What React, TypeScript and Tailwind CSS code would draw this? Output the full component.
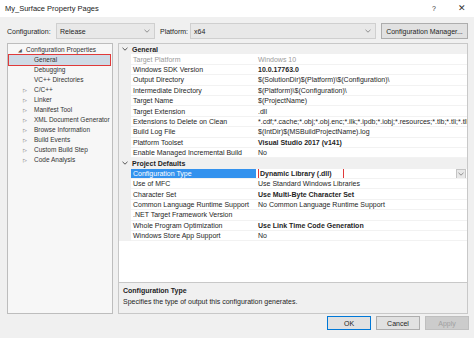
import React from "react";

type Row =
  | { kind: "header"; label: string }
  | { kind: "row"; name: string; value: string; bold?: boolean; disabled?: boolean; selected?: boolean };

const rows: Row[] = [
  { kind: "header", label: "General" },
  { kind: "row", name: "Target Platform", value: "Windows 10", disabled: true },
  { kind: "row", name: "Windows SDK Version", value: "10.0.17763.0", bold: true },
  { kind: "row", name: "Output Directory", value: "$(SolutionDir)$(Platform)\\$(Configuration)\\" },
  { kind: "row", name: "Intermediate Directory", value: "$(Platform)\\$(Configuration)\\" },
  { kind: "row", name: "Target Name", value: "$(ProjectName)" },
  { kind: "row", name: "Target Extension", value: ".dll" },
  {
    kind: "row",
    name: "Extensions to Delete on Clean",
    value: "*.cdf;*.cache;*.obj;*.obj.enc;*.ilk;*.ipdb;*.iobj;*.resources;*.tlb;*.tli;*.tlh;*.t",
  },
  { kind: "row", name: "Build Log File", value: "$(IntDir)$(MSBuildProjectName).log" },
  { kind: "row", name: "Platform Toolset", value: "Visual Studio 2017 (v141)", bold: true },
  { kind: "row", name: "Enable Managed Incremental Build", value: "No" },
  { kind: "header", label: "Project Defaults" },
  { kind: "row", name: "Configuration Type", value: "Dynamic Library (.dll)", bold: true, selected: true },
  { kind: "row", name: "Use of MFC", value: "Use Standard Windows Libraries" },
  { kind: "row", name: "Character Set", value: "Use Multi-Byte Character Set", bold: true },
  { kind: "row", name: "Common Language Runtime Support", value: "No Common Language Runtime Support" },
  { kind: "row", name: ".NET Target Framework Version", value: "" },
  { kind: "row", name: "Whole Program Optimization", value: "Use Link Time Code Generation", bold: true },
  { kind: "row", name: "Windows Store App Support", value: "No" },
];

const treeItems: { label: string; level: number; expander?: "open" | "closed"; selected?: boolean }[] = [
  { label: "Configuration Properties", level: 0, expander: "open" },
  { label: "General", level: 1, selected: true },
  { label: "Debugging", level: 1 },
  { label: "VC++ Directories", level: 1 },
  { label: "C/C++", level: 1, expander: "closed" },
  { label: "Linker", level: 1, expander: "closed" },
  { label: "Manifest Tool", level: 1, expander: "closed" },
  { label: "XML Document Generator", level: 1, expander: "closed" },
  { label: "Browse Information", level: 1, expander: "closed" },
  { label: "Build Events", level: 1, expander: "closed" },
  { label: "Custom Build Step", level: 1, expander: "closed" },
  { label: "Code Analysis", level: 1, expander: "closed" },
];

function Chevron({ className = "" }: { className?: string }) {
  return (
    <svg width="6" height="4" viewBox="0 0 6 4" className={className}>
      <path d="M0.5 0.8 L3 3.2 L5.5 0.8" fill="none" stroke="#7a7a7a" strokeWidth="0.8" />
    </svg>
  );
}

function Dropdown({ value, className }: { value: string; className: string }) {
  return (
    <div
      className={`h-[16px] flex items-center justify-between border border-[#cfcfcf] bg-[#e8e8e8] pl-[3px] pr-[4px] ${className}`}
    >
      <span>{value}</span>
      <Chevron />
    </div>
  );
}

export default function App() {
  return (
    <div
      className="w-[474px] h-[338px] bg-[#f0f0f0] overflow-hidden flex flex-col text-[7px] text-[#1e1e1e] leading-none"
      style={{ fontFamily: '"Liberation Sans", Arial, sans-serif' }}
    >
      {/* Title bar */}
      <div className="h-[17px] bg-white flex items-center justify-between pl-[5px] pr-[8px] shrink-0">
        <span className="text-[7.5px] text-[#222]">My_Surface Property Pages</span>
        <div className="flex items-center gap-[22px] text-[#333]">
          <span className="text-[7px]">?</span>
          <span className="text-[9px]">✕</span>
        </div>
      </div>

      {/* Config row */}
      <div className="flex items-center pt-[6px] pl-[7px] pr-[6px] shrink-0 h-[22px]">
        <span className="w-[49px]">Configuration:</span>
        <Dropdown value="Release" className="w-[99px]" />
        <span className="ml-[5px] w-[30px]">Platform:</span>
        <Dropdown value="x64" className="w-[186px]" />
        <div className="ml-[5px] h-[16px] w-[87px] flex items-center justify-center border border-[#adadad] bg-[#e1e1e1]">
          Configuration Manager...
        </div>
      </div>

      {/* Main */}
      <div className="flex pl-[7px] pr-[6px] pt-[4px] gap-[5px] h-[275px] shrink-0">
        {/* Tree */}
        <div className="w-[106px] h-[271px] border border-[#bdbdbd] bg-[#f7f7f7] pt-[1px] text-[6.5px]">
          {treeItems.map((t) => (
            <div key={t.label} className="h-[10px] flex items-center relative whitespace-nowrap">
              {t.selected && (
                <div className="absolute left-0 right-[1px] top-[-1px] bottom-[-1px] bg-[#cfdbe6] border-[1.5px] border-[#e03a3a]" />
              )}
              <span
                className={`relative w-[10px] text-center text-[5px] text-[#555] ${t.level === 0 ? "ml-[7px]" : "ml-[12px]"}`}
              >
                {t.expander === "open" ? "◢" : t.expander === "closed" ? "▷" : ""}
              </span>
              <span className={`relative ${t.level === 0 ? "ml-[1px]" : "ml-[4px]"} text-[#333]`}>{t.label}</span>
            </div>
          ))}
        </div>

        {/* Grid + description */}
        <div className="w-[350px] h-[271px] flex flex-col">
          <div className="h-[240px] bg-white border border-[#c8c8c8] overflow-hidden">
            {rows.map((r, i) =>
              r.kind === "header" ? (
                <div key={i} className="h-[10.4px] flex items-center bg-[#f0f0f0]">
                  <span className="w-[12px] flex justify-center">
                    <svg width="6" height="4" viewBox="0 0 6 4">
                      <path d="M0.5 0.8 L3 3.2 L5.5 0.8" fill="none" stroke="#444" strokeWidth="0.9" />
                    </svg>
                  </span>
                  <span className="font-bold ml-[1px]">{r.label}</span>
                </div>
              ) : (
                <div key={i} className="h-[10.4px] flex items-stretch">
                  <div className="w-[12px] bg-[#f0f0f0] shrink-0" />
                  <div
                    className={`w-[125px] shrink-0 flex items-center pl-[2px] whitespace-nowrap overflow-hidden border-b border-[#f2f2f2] ${
                      r.selected ? "bg-[#3392ee] text-white" : r.disabled ? "text-[#9a9a9a]" : ""
                    }`}
                  >
                    {r.name}
                  </div>
                  <div className="flex-1 min-w-0 relative flex items-center pl-[2px] whitespace-nowrap overflow-hidden border-b border-[#f2f2f2]">
                    {r.selected ? (
                      <>
                        <span className="font-bold border-[1.5px] border-[#e03a3a] px-[1px] h-[12px] flex items-center w-[86px]">
                          {r.value}
                        </span>
                        <div className="absolute right-[1px] top-[0.5px] w-[10px] h-[9.5px] bg-[#e8e8e8] border border-[#c4c4c4] flex items-center justify-center">
                          <Chevron />
                        </div>
                      </>
                    ) : (
                      <span className={r.bold ? "font-bold" : r.disabled ? "text-[#9a9a9a]" : ""}>{r.value}</span>
                    )}
                  </div>
                </div>
              )
            )}
          </div>
          <div className="h-[31px] border border-t-0 border-[#c8c8c8] bg-[#f0f0f0] pl-[4px] pt-[4px]">
            <div className="font-bold">Configuration Type</div>
            <div className="mt-[4px]">Specifies the type of output this configuration generates.</div>
          </div>
        </div>
      </div>

      {/* Buttons */}
      <div className="flex justify-end gap-[5px] pr-[5px] pt-[2px]">
        <div className="w-[44px] h-[14px] flex items-center justify-center bg-[#e1e1e1] border border-[#0078d7]">OK</div>
        <div className="w-[44px] h-[14px] flex items-center justify-center bg-[#e1e1e1] border border-[#adadad]">
          Cancel
        </div>
        <div className="w-[44px] h-[14px] flex items-center justify-center bg-[#cccccc] border border-[#bfbfbf] text-[#a0a0a0]">
          Apply
        </div>
      </div>
    </div>
  );
}
